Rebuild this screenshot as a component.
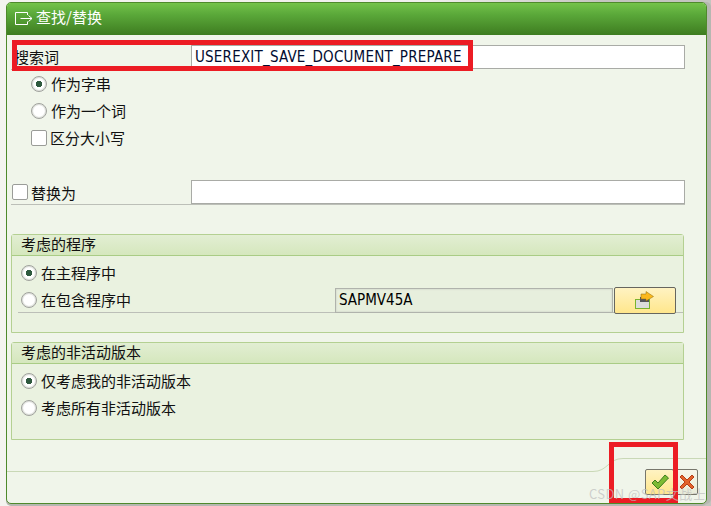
<div class="page">
  <div class="win">
    <header class="title">
      <svg class="ticon" width="20" height="16" viewBox="0 0 20 16"><path d="M1.500 2.500H13.500V5M1.500 2.500V14.500H13.500V11.500M6.500 8.500H18M18 8.500L14.500 5.500M18 8.500L14.500 11.500" fill="none" stroke="#fff" stroke-width="1"/></svg>
      <span class="ttext">查找/替换</span>
    </header>
    <div class="body">
      <div class="row first">
        <span class="lab search">搜索词</span>
        <div class="input">USEREXIT_SAVE_DOCUMENT_PREPARE</div>
      </div>
      <div class="opts">
        <label class="opt"><i class="radio on"></i>作为字串</label>
        <label class="opt"><i class="radio"></i>作为一个词</label>
        <label class="opt"><i class="check"></i>区分大小写</label>
      </div>
      <div class="row second">
        <span class="lab rep"><i class="check"></i>替换为</span>
        <div class="input"></div>
      </div>
      <section class="group g1">
        <h3>考虑的程序</h3>
        <div class="gbody">
          <label class="opt"><i class="radio on"></i>在主程序中</label>
          <div class="incl">
            <label class="opt"><i class="radio"></i>在包含程序中</label>
            <div class="ro">SAPMV45A</div>
            <button class="btn" aria-label="选择">
              <svg width="20" height="18" viewBox="0 0 20 18"><rect x="0.500" y="8.500" width="14" height="9" fill="#dcdcdc" stroke="#7ab32e"/><rect x="5" y="6" width="9" height="5" fill="#55555c"/><path d="M6 3H11V0.500L18.500 5.500L11 10V8H6Z" fill="#fbb81c" stroke="#8a6a10" stroke-width=".5"/></svg>
            </button>
          </div>
        </div>
      </section>
      <section class="group g2">
        <h3>考虑的非活动版本</h3>
        <div class="gbody">
          <label class="opt"><i class="radio on"></i>仅考虑我的非活动版本</label>
          <label class="opt"><i class="radio"></i>考虑所有非活动版本</label>
        </div>
      </section>
      <footer class="foot">
        <svg class="curve" width="699" height="40" viewBox="0 0 699 40"><path d="M0 31.500H586C601 31.500 601 18.500 616 18.500H699" fill="none" stroke="#c9d8b6"/></svg>
        <div class="acts">
          <button class="act" aria-label="确定">
            <svg width="20" height="18" viewBox="0 0 20 18"><path d="M2 10L5 7L8 10L15 2L18.500 5L8 16Z" fill="#7dbb34" stroke="#3c7d1e" stroke-width="1"/></svg>
          </button>
          <button class="act" aria-label="取消">
            <svg width="18" height="18" viewBox="0 0 18 18"><path d="M2 4L4 2L9 7L14 2L16 4L11 9L16 14L14 16L9 11L4 16L2 14L7 9Z" fill="#e2632c" stroke="#b63d18" stroke-width="1"/></svg>
          </button>
        </div>
      </footer>
    </div>
  </div>
  <div class="mark m1"></div>
  <div class="mark m2"></div>
  <div class="wm">CSDN @SAP文战士</div>
</div>

<style>
  :global(body) { margin: 0; background: #fff; }
  .page {
    position: relative; width: 711px; height: 506px; overflow: hidden;
    background: linear-gradient(90deg, #f4f4f0, #f0f0ec 60%, #c4c5bf 85%);
    font-family: "Noto Sans CJK SC", "Liberation Sans", sans-serif; font-size: 15px; color: #111;
  }
  .win {
    position: absolute; left: 6px; top: 2px; width: 701px; height: 502px; box-sizing: border-box;
    border: 1px solid #4f8a2c; border-radius: 5px; background: #f0f5ea; overflow: hidden;
    box-shadow: 4px 0 0 #b6b7b1, 0 2px 0 #b6b7b1; display: flex; flex-direction: column;
  }
  .title {
    height: 32px; flex: none; box-sizing: border-box; display: flex; align-items: center; gap: 2px; padding: 0 0 3px 7px; color: #fff; font-size: 15px;
    background: linear-gradient(#74c34a, #5ba93a 35%, #3e7c20);
  }
  .ttext { padding-bottom: 2px; }
  .ticon { flex: none; }
  .body { flex: 1; display: flex; flex-direction: column; position: relative; }
  .row { display: flex; align-items: stretch; border-bottom: 1px solid #bcbfb8; margin-left: 4px; }
  .first { margin-top: 10px; height: 24px; width: 449px; }
  .lab { flex: none; display: flex; align-items: center; }
  .search { padding: 0 0 2px 3px; width: 177px; box-sizing: content-box; }
  .input {
    flex: 1; box-sizing: border-box; background: #fff; border: 1px solid #a9aba6;
    padding-left: 3px; font-family: "DejaVu Sans Condensed", "Liberation Sans", sans-serif; font-size: 15px; letter-spacing: .2px; line-height: 23px; color: #020c30;
    white-space: nowrap;
  }
  .first .input { flex: none; width: 494px; }
  .opts { display: flex; flex-direction: column; margin-left: 24px; }
  .opts .opt { height: 27px; }
  .opt { display: flex; align-items: center; gap: 4px; white-space: nowrap; }
  .opt .check { margin-right: -1px; }
  .radio {
    width: 16px; height: 16px; flex: none; border-radius: 50%; box-sizing: border-box; border: 1px solid #a0a29d;
    background: radial-gradient(circle, #fff 50%, #dcdeda); box-shadow: inset 0 0 0 1px #dfe1dc;
  }
  .radio.on { background: radial-gradient(circle, #2f5a3f 0 3px, #fff 3.5px 5px, #dcdeda); }
  .check {
    width: 16px; height: 16px; flex: none; box-sizing: border-box; border: 1px solid #9a9c98; border-radius: 2px; background: #fff; display: inline-block;
  }
  .second { margin-top: 29px; width: 674px; height: 24px; }
  .rep { gap: 3px; padding-left: 1px; width: 180px; box-sizing: border-box; }
  .group { margin-left: 4px; width: 673px; box-sizing: border-box; border: 1px solid #b4d092; border-radius: 3px 3px 0 0; background: #eaf2e0; }
  .group h3 {
    margin: 0; height: 20px; font-weight: 400; font-size: 15px; line-height: 18px; padding-left: 9px;
    background: linear-gradient(#e2eed3, #d5e7bd); border-bottom: 1px solid #a9cc85;
  }
  .g1 { margin-top: 29px; height: 99px; }
  .g2 { margin-top: 9px; height: 98px; }
  .gbody { display: flex; flex-direction: column; padding-left: 9px; padding-top: 3px; }
  .gbody .opt { height: 27px; flex: none; box-sizing: border-box; padding-bottom: 1px; }
  .gbody .radio { margin-top: 1px; }
  .incl { display: flex; align-items: center; border-bottom: 1px solid #bcbfb8; margin-left: -3px; padding-left: 3px; height: 24px; margin-top: 2px; }
  .incl .opt { width: 314px; }
  .ro {
    width: 278px; height: 25px; box-sizing: border-box; border: 1px solid #b0b3ac; background: #e7efdd; box-shadow: inset 0 0 2px #bfc3ba;
    font-family: "DejaVu Sans Condensed", "Liberation Sans", sans-serif; font-size: 15px; line-height: 23px; padding-left: 3px; flex: none; color: #000;
  }
  .btn {
    width: 62px; height: 27px; margin: 0 0 0 1px; flex: none; padding: 0; border: 1px solid #66665f; border-radius: 2px;
    background: linear-gradient(#fff3c2, #ffe68c); display: flex; align-items: center; justify-content: center;
  }
  .foot { flex: 1; position: relative; display: flex; justify-content: flex-end; align-items: flex-end; }
  .curve { position: absolute; left: 0; top: 0; }
  .acts { display: flex; gap: 1px; padding: 0 8px 8px 0; position: relative; }
  .act {
    width: 29px; height: 26px; padding: 0; border: 1px solid #77776c; border-radius: 2px; background: linear-gradient(#fff3c2, #ffe68c);
    display: flex; align-items: center; justify-content: center;
  }
  .act:last-child { width: 23px; background: linear-gradient(#f6f6ea, #e8ebd8); }
  .mark { position: absolute; box-sizing: border-box; border: 5px solid #ec1c24; pointer-events: none; }
  .m1 { left: 12px; top: 40px; width: 461px; height: 31px; }
  .m2 { left: 609px; top: 442px; width: 69px; height: 61px; }
  .wm { position: absolute; left: 589px; top: 484px; font-size: 13px; letter-spacing: .4px; color: rgba(190,190,190,.7); white-space: nowrap; }
</style>
